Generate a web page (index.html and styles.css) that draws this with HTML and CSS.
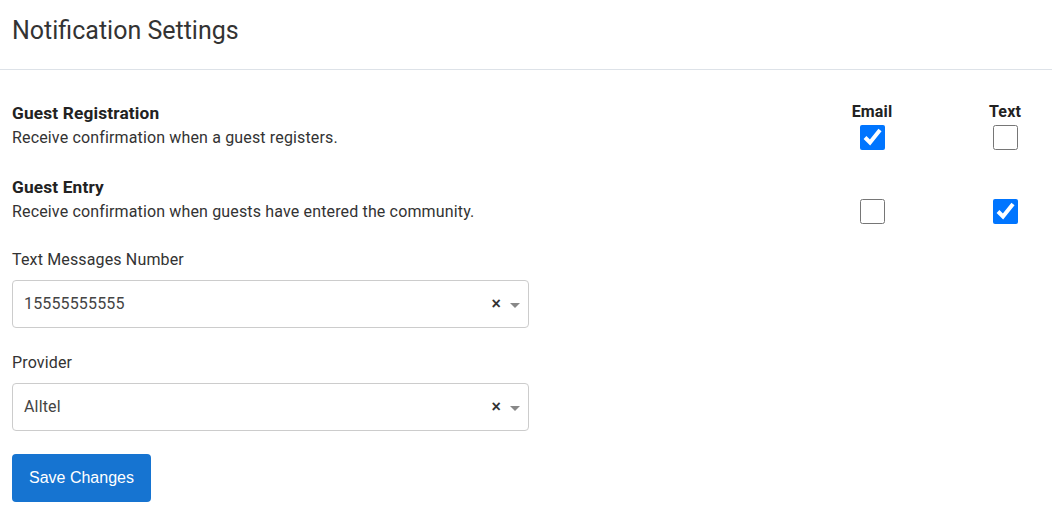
FILE: index.html
```html
<!DOCTYPE html>
<html lang="en">
<head>
<meta charset="utf-8">
<title>Notification Settings</title>
<link rel="stylesheet" href="styles.css">
</head>
<body>
<header class="page-header">
  <h1 class="page-title">Notification Settings</h1>
</header>
<main class="content">
  <div class="settings">
    <div class="setting-title">Guest Registration</div>
    <div class="col-head">Email</div>
    <div class="col-head">Text</div>
    <div class="setting-desc">Receive confirmation when a guest registers.</div>
    <div class="cb-cell"><input type="checkbox" class="cb" checked></div>
    <div class="cb-cell"><input type="checkbox" class="cb"></div>

    <div class="setting-title spaced">Guest Entry</div>
    <div class="spaced"></div>
    <div class="spaced"></div>
    <div class="setting-desc">Receive confirmation when guests have entered the community.</div>
    <div class="cb-cell"><input type="checkbox" class="cb"></div>
    <div class="cb-cell"><input type="checkbox" class="cb" checked></div>
  </div>

  <div class="form-group">
    <label class="field-label">Text Messages Number</label>
    <div class="select">
      <span class="select-value">15555555555</span>
      <span class="select-clear">×</span>
      <span class="select-arrow"></span>
    </div>
  </div>

  <div class="form-group">
    <label class="field-label">Provider</label>
    <div class="select">
      <span class="select-value">Alltel</span>
      <span class="select-clear">×</span>
      <span class="select-arrow"></span>
    </div>
  </div>

  <button class="btn-primary" type="button">Save Changes</button>
</main>
</body>
</html>
```

FILE: styles.css
```css
* { box-sizing: border-box; }

body {
  margin: 0;
  background: #ffffff;
  font-family: Roboto, "Liberation Sans", sans-serif;
  color: #333333;
  font-size: 16px;
  line-height: 24px;
  letter-spacing: 0.15px;
}

.page-header {
  padding: 16px 12px 24px;
  border-bottom: 1px solid #dde2e8;
}

.page-title {
  margin: 0;
  font-size: 25px;
  font-weight: 400;
  line-height: 29px;
  letter-spacing: 0;
  color: #333333;
}

.content {
  padding: 31px 12px 0;
}

.settings {
  display: grid;
  grid-template-columns: 1fr 70px 70px;
  column-gap: 63px;
  align-items: center;
  margin-bottom: 24px;
}

.setting-title {
  font-weight: 700;
  font-size: 17.3px;
  color: #222222;
}

.spaced { margin-top: 25px; }

.col-head {
  font-weight: 700;
  text-align: center;
  color: #222222;
  margin-top: -3px;
}

.setting-desc { color: #333333; }

.cb-cell {
  display: flex;
  justify-content: center;
  align-items: center;
}

.cb {
  width: 25px;
  height: 25px;
  margin: 0;
}

.form-group { margin-bottom: 23px; }

.field-label {
  display: block;
  margin-bottom: 8px;
  color: #333333;
}

.select {
  width: 517px;
  height: 48px;
  border: 1px solid #cccccc;
  border-radius: 4px;
  display: flex;
  align-items: center;
  padding: 0 8px 0 11px;
}

.select-value {
  flex: 1;
  color: #444444;
}

.select-clear {
  font-weight: 700;
  color: #333333;
  font-size: 16px;
  margin-right: 9px;
  font-family: "Liberation Sans", sans-serif;
}

.select-arrow {
  width: 0;
  height: 0;
  border-style: solid;
  border-width: 5px 5px 0 5px;
  border-color: #888888 transparent transparent transparent;
  margin-top: 2px;
}

.btn-primary {
  height: 48px;
  padding: 0 17px;
  background: #1674d1;
  color: #ffffff;
  border: none;
  border-radius: 4px;
  font-family: "Liberation Sans", Arial, sans-serif;
  font-size: 16px;
}
```
